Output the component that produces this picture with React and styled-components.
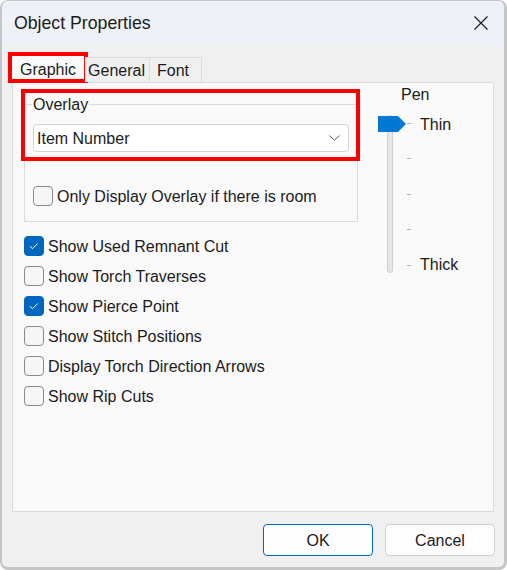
import React from "react";
import styled, { createGlobalStyle } from "styled-components";

const GlobalStyle = createGlobalStyle`
  html, body { margin: 0; padding: 0; background: #ffffff; }
  body {
    font-family: "Liberation Sans", Arial, sans-serif;
    font-size: 16px;
    color: #1b1b1b;
  }
  * { box-sizing: border-box; }
`;

const Window = styled.div`
  width: 507px;
  height: 570px;
  display: flex;
  flex-direction: column;
  background: #f0f0f0;
  border-style: solid;
  border-color: #c6c6c6;
  border-width: 1px 3px 3px 2px;
  border-radius: 8px;
  overflow: hidden;
`;

const TitleBar = styled.div`
  height: 44px;
  flex: none;
  display: flex;
  align-items: center;
  justify-content: space-between;
  padding-left: 12px;
  background: #eef2f8;
`;

const Title = styled.div`
  font-size: 17.7px;
  line-height: 20px;
  color: #1b1b1b;
`;

const CloseButton = styled.div`
  width: 47px;
  height: 44px;
  display: flex;
  align-items: center;
  justify-content: center;
`;

const Body = styled.div`
  flex: 1;
  display: flex;
  flex-direction: column;
  padding: 10px 10px 11px 10px;
  min-height: 0;
`;

const TabRow = styled.div`
  display: flex;
  align-items: flex-end;
  height: 27px;
  flex: none;
`;

const Tab = styled.div`
  position: relative;
  height: ${(p) => (p.$selected ? "27px" : "25px")};
  line-height: ${(p) => (p.$selected ? "27px" : "25px")};
  margin-left: ${(p) => (p.$selected ? "-1px" : "0")};
  padding: ${(p) => p.$pad};
  background: ${(p) => (p.$selected ? "#f9f9f9" : "#f0f0f0")};
  border: 1px solid #dcdcdc;
  border-bottom: none;
  border-left: ${(p) => (p.$noLeft ? "none" : "1px solid #dcdcdc")};
  white-space: nowrap;
  &::after {
    content: "";
    display: ${(p) => (p.$highlight ? "block" : "none")};
    position: absolute;
    left: -4px;
    right: -4px;
    top: -4px;
    bottom: -1px;
    border: 4px solid #ff0000;
    pointer-events: none;
  }
`;

const Panel = styled.div`
  flex: 1;
  display: flex;
  background: #f9f9f9;
  border: 1px solid #dcdcdc;
  padding: 3px 0 0 11px;
`;

const LeftColumn = styled.div`
  width: 334px;
  margin-top: 18px;
  display: flex;
  flex-direction: column;
`;

const GroupFrame = styled.div`
  position: relative;
  border: 1px solid #dcdcdc;
  padding: 19px 8px 15px 8px;
  display: flex;
  flex-direction: column;
  gap: 34px;
`;

const GroupLabel = styled.div`
  position: absolute;
  top: -9px;
  left: 7px;
  padding: 0 1px;
  line-height: 18px;
  background: #f9f9f9;
`;

const Highlight = styled.div`
  position: absolute;
  left: -4px;
  top: -16px;
  width: 339px;
  height: 72px;
  border: 4px solid #ff0000;
  pointer-events: none;
`;

const Dropdown = styled.div`
  height: 28px;
  display: flex;
  align-items: center;
  justify-content: space-between;
  padding: 0 8px 0 3px;
  background: #ffffff;
  border: 1px solid #d4d4d4;
  border-radius: 4px;
`;

const DropdownText = styled.span`
  line-height: 20px;
  padding-top: 2px;
`;

const CheckList = styled.div`
  margin-top: 14px;
  display: flex;
  flex-direction: column;
  gap: 10px;
`;

const CheckRow = styled.div`
  display: flex;
  align-items: flex-start;
  gap: 4px;
  height: 20px;
  white-space: nowrap;
`;

const CheckLabel = styled.span`
  line-height: 20px;
  padding-top: 1px;
`;

const Box = styled.div`
  width: 20px;
  height: 20px;
  flex: none;
  border-radius: 4px;
  display: flex;
  align-items: center;
  justify-content: center;
  background: ${(p) => (p.$checked ? "#0067c0" : "#f6f6f6")};
  border: 1px solid ${(p) => (p.$checked ? "#0067c0" : "#8a8a8a")};
`;

const SliderColumn = styled.div`
  margin-left: 20px;
  display: flex;
  flex-direction: column;
`;

const PenLabel = styled.div`
  margin-left: 23px;
  height: 18px;
  line-height: 18px;
`;

const SliderBody = styled.div`
  margin-top: 11px;
  height: 158px;
  display: flex;
`;

const TrackArea = styled.div`
  position: relative;
  width: 29px;
  height: 100%;
`;

const Track = styled.div`
  margin-left: 9px;
  width: 6px;
  height: 100%;
  background: #e6e6e6;
  border: 1px solid #cfcfcf;
  border-radius: 3px;
`;

const Thumb = styled.svg`
  position: absolute;
  left: 0;
  top: 1px;
`;

const TickColumn = styled.div`
  height: 100%;
  display: flex;
  flex-direction: column;
  justify-content: space-between;
`;

const TickRow = styled.div`
  height: 16px;
  display: flex;
  align-items: center;
`;

const Tick = styled.div`
  width: 4px;
  height: 1px;
  background: #b4b4b4;
`;

const TickLabel = styled.div`
  margin-left: 9px;
  margin-top: ${(p) => (p.$first ? "3px" : "-1px")};
  line-height: 16px;
`;

const ButtonRow = styled.div`
  margin-top: 12px;
  margin-right: -1px;
  display: flex;
  justify-content: flex-end;
  gap: 12px;
  flex: none;
`;

const Button = styled.div`
  width: 110px;
  height: 32px;
  display: flex;
  align-items: center;
  justify-content: center;
  padding-top: 2px;
  background: #fdfdfd;
  border: 1px solid ${(p) => (p.$primary ? "#0067c0" : "#d0d0d0")};
  border-radius: 4px;
`;

const CheckMark = () => (
  <svg width="20" height="20" viewBox="0 0 20 20">
    <path d="M5.5 10.2 L8.3 13 L14 7.3" fill="none" stroke="#ffffff" strokeWidth="1.1" />
  </svg>
);

const Check = ({ checked, label }) => (
  <CheckRow>
    <Box $checked={checked}>{checked && <CheckMark />}</Box>
    <CheckLabel>{label}</CheckLabel>
  </CheckRow>
);

const options = [
  { label: "Show Used Remnant Cut", checked: true },
  { label: "Show Torch Traverses", checked: false },
  { label: "Show Pierce Point", checked: true },
  { label: "Show Stitch Positions", checked: false },
  { label: "Display Torch Direction Arrows", checked: false },
  { label: "Show Rip Cuts", checked: false },
];

const ticks = ["Thin", "", "", "", "Thick"];

export default function App() {
  return (
    <>
      <GlobalStyle />
      <Window>
        <TitleBar>
          <Title>Object Properties</Title>
          <CloseButton>
            <svg width="14" height="14" viewBox="0 0 14 14">
              <path d="M0.5 0.5 L13.5 13.5 M13.5 0.5 L0.5 13.5" stroke="#1b1b1b" strokeWidth="1.2" />
            </svg>
          </CloseButton>
        </TitleBar>
        <Body>
          <TabRow>
            <Tab $selected $highlight $pad="0 8px">Graphic</Tab>
            <Tab $noLeft $pad="0 4px 0 3px">General</Tab>
            <Tab $noLeft $pad="0 12px 0 7px">Font</Tab>
          </TabRow>
          <Panel>
            <LeftColumn>
              <GroupFrame>
                <GroupLabel>Overlay</GroupLabel>
                <Dropdown>
                  <DropdownText>Item Number</DropdownText>
                  <svg width="11" height="6" viewBox="0 0 11 6">
                    <path d="M0.5 0.5 L5.5 5.2 L10.5 0.5" fill="none" stroke="#555" strokeWidth="1" />
                  </svg>
                </Dropdown>
                <Check checked={false} label="Only Display Overlay if there is room" />
                <Highlight />
              </GroupFrame>
              <CheckList>
                {options.map((o) => (
                  <Check key={o.label} checked={o.checked} label={o.label} />
                ))}
              </CheckList>
            </LeftColumn>
            <SliderColumn>
              <PenLabel>Pen</PenLabel>
              <SliderBody>
                <TrackArea>
                  <Track />
                  <Thumb width="28" height="16" viewBox="0 0 28 16">
                    <polygon points="0,0 20,0 28,8 20,16 0,16" fill="#0078d4" />
                  </Thumb>
                </TrackArea>
                <TickColumn>
                  {ticks.map((t, i) => (
                    <TickRow key={i}>
                      <Tick />
                      {t && <TickLabel $first={i === 0}>{t}</TickLabel>}
                    </TickRow>
                  ))}
                </TickColumn>
              </SliderBody>
            </SliderColumn>
          </Panel>
          <ButtonRow>
            <Button $primary>OK</Button>
            <Button>Cancel</Button>
          </ButtonRow>
        </Body>
      </Window>
    </>
  );
}
